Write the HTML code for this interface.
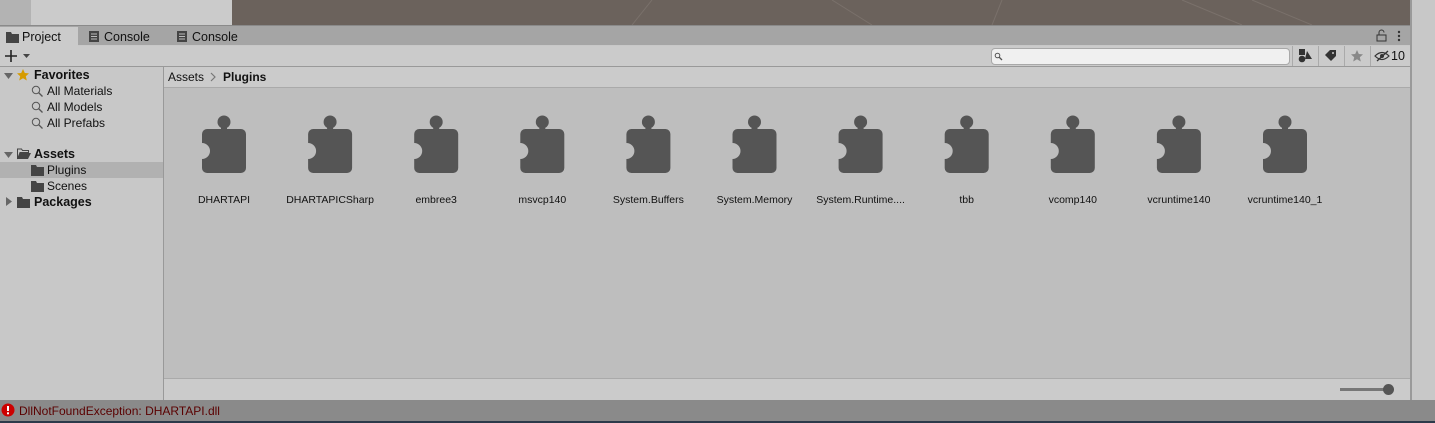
<!DOCTYPE html>
<html><head><style>
body{margin:0;width:1435px;height:423px;position:relative;overflow:hidden;font-family:"Liberation Sans",sans-serif;font-size:12px;color:#111;background:#c8c8c8}
.a{position:absolute}
.it{position:absolute;font-size:12px;white-space:nowrap}
.lbl{position:absolute;top:194px;width:106px;text-align:center;font-size:10.5px;color:#111}
</style></head><body>
<div class="a" style="left:0;top:0;width:31px;height:25px;background:#b3b3b3"></div>
<div class="a" style="left:31px;top:0;width:201px;height:25px;background:#cbcbcb"></div>
<div class="a" style="left:232px;top:0;width:1178px;height:25px;background:#6b625c"></div>
<svg class="a" style="left:232px;top:0" width="1178" height="25"><g stroke="#7a716b" stroke-width="1" fill="none"><line x1="420" y1="0" x2="400" y2="25"/><line x1="600" y1="0" x2="640" y2="25"/><line x1="770" y1="0" x2="760" y2="25"/><line x1="950" y1="0" x2="1010" y2="25"/><line x1="1020" y1="0" x2="1080" y2="25"/></g></svg>
<div class="a" style="left:0;top:25px;width:1410px;height:1px;background:#8a8a8a"></div>
<div class="a" style="left:1410px;top:0;width:2px;height:400px;background:#9a9a9a"></div>
<div class="a" style="left:1412px;top:0;width:23px;height:400px;background:#c8c8c8"></div>
<!-- tab bar -->
<div class="a" style="left:0;top:26px;width:1410px;height:19px;background:#a5a5a5"></div>
<div class="a" style="left:0;top:27px;width:78px;height:19px;background:#cbcbcb"></div>
<svg class="a" style="left:6px;top:31px" width="14" height="12"><path d="M0 1h5l1 2h7v9H0z" fill="#444"/></svg>
<div class="it" style="left:22px;top:30px;font-size:12.5px">Project</div>
<svg class="a" style="left:89px;top:31px" width="10" height="11"><rect x="0" y="0" width="10" height="11" fill="#444"/><g stroke="#bbb"><line x1="2" y1="3" x2="8" y2="3"/><line x1="2" y1="5.5" x2="8" y2="5.5"/><line x1="2" y1="8" x2="8" y2="8"/></g></svg>
<div class="it" style="left:104px;top:30px;font-size:12.5px">Console</div>
<svg class="a" style="left:177px;top:31px" width="10" height="11"><rect x="0" y="0" width="10" height="11" fill="#444"/><g stroke="#bbb"><line x1="2" y1="3" x2="8" y2="3"/><line x1="2" y1="5.5" x2="8" y2="5.5"/><line x1="2" y1="8" x2="8" y2="8"/></g></svg>
<div class="it" style="left:192px;top:30px;font-size:12.5px">Console</div>
<svg class="a" style="left:1375px;top:29px" width="30" height="14"><path d="M2 12V6h9v6z" fill="none" stroke="#333"/><path d="M4 6V3.5a2.5 2.5 0 0 1 5 0" fill="none" stroke="#333"/><circle cx="24" cy="3" r="1.2" fill="#333"/><circle cx="24" cy="7" r="1.2" fill="#333"/><circle cx="24" cy="11" r="1.2" fill="#333"/></svg>
<!-- toolbar -->
<div class="a" style="left:0;top:46px;width:1410px;height:20px;background:#cbcbcb;border-bottom:1px solid #999"></div>
<svg class="a" style="left:5px;top:49px" width="26" height="14"><path d="M6 1v12M0 7h12" stroke="#222" stroke-width="1.6"/><path d="M18 5h7l-3.5 4z" fill="#444"/></svg>
<div class="a" style="left:991px;top:48px;width:297px;height:15px;background:#f0f0f0;border:1px solid #a8a8a8;border-radius:4px"></div>
<svg class="a" style="left:994px;top:52px" width="10" height="9"><circle cx="3.5" cy="3.5" r="2.3" fill="none" stroke="#555"/><line x1="5" y1="5" x2="8" y2="8" stroke="#555" stroke-width="1.3"/></svg>
<div class="a" style="left:1292px;top:46px;width:1px;height:20px;background:#aaa"></div>
<div class="a" style="left:1318px;top:46px;width:1px;height:20px;background:#aaa"></div>
<div class="a" style="left:1344px;top:46px;width:1px;height:20px;background:#aaa"></div>
<div class="a" style="left:1370px;top:46px;width:1px;height:20px;background:#aaa"></div>
<svg class="a" style="left:1298px;top:49px" width="16" height="14"><rect x="1" y="0" width="6" height="6" fill="#333"/><circle cx="4" cy="10" r="3.3" fill="#333"/><path d="M9 2l5 8H7z" fill="#333"/></svg>
<svg class="a" style="left:1324px;top:49px" width="14" height="14"><path d="M1 6l5-5h6v6l-5 5z" fill="#333"/><circle cx="9" cy="4" r="1" fill="#cbcbcb"/></svg>
<svg class="a" style="left:1350px;top:49px" width="14" height="14"><path d="M7 1l1.8 4 4.2.4-3.2 2.8 1 4.3L7 10.2 3.2 12.5l1-4.3L1 5.4l4.2-.4z" fill="#888"/></svg>
<svg class="a" style="left:1374px;top:49px" width="18" height="14"><path d="M1 7q7-7 14 0q-7 7-14 0z" fill="none" stroke="#333" stroke-width="1.2"/><circle cx="8" cy="7" r="2" fill="#333"/><line x1="3" y1="12" x2="14" y2="2" stroke="#333" stroke-width="1.3"/></svg>
<div class="it" style="left:1391px;top:49px;font-size:12.5px">10</div>
<!-- left panel -->
<div class="a" style="left:0;top:67px;width:163px;height:333px;background:#c8c8c8"></div>
<div class="a" style="left:163px;top:67px;width:1px;height:333px;background:#999"></div>
<svg class="a" style="left:4px;top:71px" width="10" height="10"><path d="M0 2h9l-4.5 6z" fill="#666"/></svg>
<svg class="a" style="left:16px;top:68px" width="14" height="14"><path d="M7 1l1.8 4 4.2.4-3.2 2.8 1 4.3L7 10.2 3.2 12.5l1-4.3L1 5.4l4.2-.4z" fill="#d69b00"/></svg>
<div class="it" style="left:34px;top:68px;font-weight:bold;font-size:12.5px">Favorites</div>
<svg class="a" style="left:31px;top:85px" width="13" height="13"><circle cx="5" cy="5" r="3.7" fill="none" stroke="#555"/><line x1="7.5" y1="7.5" x2="11.5" y2="11.5" stroke="#555" stroke-width="1.3"/></svg>
<div class="it" style="left:47px;top:84px">All Materials</div>
<svg class="a" style="left:31px;top:101px" width="13" height="13"><circle cx="5" cy="5" r="3.7" fill="none" stroke="#555"/><line x1="7.5" y1="7.5" x2="11.5" y2="11.5" stroke="#555" stroke-width="1.3"/></svg>
<div class="it" style="left:47px;top:100px">All Models</div>
<svg class="a" style="left:31px;top:117px" width="13" height="13"><circle cx="5" cy="5" r="3.7" fill="none" stroke="#555"/><line x1="7.5" y1="7.5" x2="11.5" y2="11.5" stroke="#555" stroke-width="1.3"/></svg>
<div class="it" style="left:47px;top:116px">All Prefabs</div>
<svg class="a" style="left:4px;top:150px" width="10" height="10"><path d="M0 2h9l-4.5 6z" fill="#666"/></svg>
<svg class="a" style="left:17px;top:148px" width="15" height="12"><path d="M0.5 1h4l1 1.5h6v2H3L0.5 11z" fill="none" stroke="#444"/><path d="M3 5h11l-3 6H0.5z" fill="#444"/></svg>
<div class="it" style="left:34px;top:147px;font-weight:bold;font-size:12.5px">Assets</div>
<div class="a" style="left:0;top:162px;width:163px;height:16px;background:#b1b1b1"></div>
<svg class="a" style="left:31px;top:165px" width="14" height="11"><path d="M0 0h5l1 2h7v9H0z" fill="#444"/></svg>
<div class="it" style="left:47px;top:163px">Plugins</div>
<svg class="a" style="left:31px;top:181px" width="14" height="11"><path d="M0 0h5l1 2h7v9H0z" fill="#444"/></svg>
<div class="it" style="left:47px;top:179px">Scenes</div>
<svg class="a" style="left:4px;top:197px" width="10" height="10"><path d="M2 0v9l6-4.5z" fill="#666"/></svg>
<svg class="a" style="left:17px;top:197px" width="14" height="11"><path d="M0 0h5l1 2h7v9H0z" fill="#444"/></svg>
<div class="it" style="left:34px;top:195px;font-weight:bold;font-size:12.5px">Packages</div>
<!-- right -->
<div class="a" style="left:164px;top:67px;width:1246px;height:20px;background:#cbcbcb;border-bottom:1px solid #aaa"></div>
<div class="it" style="left:168px;top:70px">Assets</div>
<svg class="a" style="left:209px;top:72px" width="8" height="10"><path d="M2 1l4 4-4 4" fill="none" stroke="#777" stroke-width="1.2"/></svg>
<div class="it" style="left:223px;top:70px;font-weight:bold">Plugins</div>
<div class="a" style="left:164px;top:88px;width:1246px;height:290px;background:#bebebe"></div>
<div class="a" style="left:164px;top:378px;width:1246px;height:1px;background:#aaa"></div>
<div class="a" style="left:164px;top:379px;width:1246px;height:21px;background:#cbcbcb"></div>
<div class="a" style="left:1340px;top:388px;width:46px;height:3px;background:#777"></div>
<div class="a" style="left:1383px;top:384px;width:11px;height:11px;border-radius:50%;background:#555"></div>
<svg class="a" style="left:0;top:0" width="1435" height="423" id="g"></svg>
<div id="labels"></div>
<!-- status -->
<div class="a" style="left:0;top:400px;width:1435px;height:21px;background:#8a8a8a"></div>
<div class="a" style="left:0;top:421px;width:1435px;height:2px;background:#2c3a4a"></div>
<svg class="a" style="left:1px;top:403px" width="14" height="14"><circle cx="7" cy="7" r="6.5" fill="#c00"/><rect x="6" y="3" width="2" height="5" fill="#fff"/><rect x="6" y="9.3" width="2" height="2" fill="#fff"/></svg>
<div class="it" style="left:19px;top:404px;color:#5a0000">DllNotFoundException: DHARTAPI.dll</div>
<script>
var names=["DHARTAPI","DHARTAPICSharp","embree3","msvcp140","System.Buffers","System.Memory","System.Runtime....","tbb","vcomp140","vcruntime140","vcruntime140_1"];
var g=document.getElementById('g'),s='',h='';
names.forEach(function(n,i){var cx=224+i*106.1;
s+='<g fill="#555"><circle cx="'+cx+'" cy="122" r="6.5"/><rect x="'+(cx-3)+'" y="122" width="6" height="8"/><rect x="'+(cx-22)+'" y="129" width="44" height="44" rx="5"/></g><circle cx="'+(cx-22)+'" cy="151" r="8" fill="#bebebe"/>';
h+='<div class="lbl" style="left:'+(cx-53)+'px">'+n+'</div>';});
g.innerHTML=s;document.getElementById('labels').innerHTML=h;
</script>
</body></html>
